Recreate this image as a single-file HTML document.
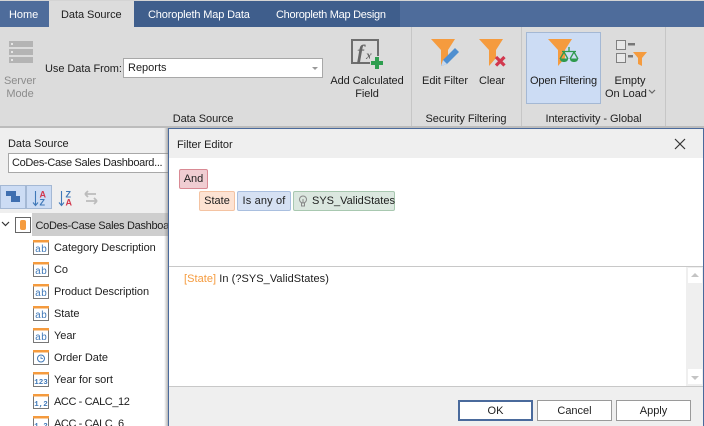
<!DOCTYPE html>
<html><head><meta charset="utf-8">
<style>
html,body{margin:0;padding:0;width:704px;height:426px;overflow:hidden;background:#efefef}
body{font-family:"Liberation Sans",sans-serif;font-size:11px;color:#1e1e1e;position:relative}
.a{position:absolute;white-space:nowrap}
.t{position:absolute;white-space:nowrap;line-height:14px;letter-spacing:-.05px;margin-top:1px}
.c{text-align:center}
svg{position:absolute;overflow:visible}
.btn{position:absolute;box-sizing:border-box;background:#fff;border:1px solid #9a9a9a;text-align:center;line-height:20px;height:21px;top:400px}
.tok{position:absolute;box-sizing:border-box;height:20px;line-height:19px;border-radius:2px;border:1px solid;text-align:center}
</style></head><body>
<!-- tabs -->
<div class="a" style="left:0;top:0;width:704px;height:1px;background:#d4d4d4"></div>
<div class="a" style="left:0;top:1px;width:704px;height:26px;background:#4e6c9b"></div>
<div class="a" style="left:134px;top:1px;width:266px;height:26px;background:#3f5e8c"></div>
<div class="a" style="left:49px;top:1px;width:85px;height:26px;background:#dcdcdc"></div>
<div class="t" style="left:9px;top:7px;color:#fff">Home</div>
<div class="t" style="left:61px;top:7px">Data Source</div>
<div class="t" style="left:148px;top:7px;color:#fff;letter-spacing:-.15px">Choropleth Map Data</div>
<div class="t" style="left:276px;top:7px;color:#fff;letter-spacing:-.28px">Choropleth Map Design</div>
<!-- ribbon -->
<div class="a" style="left:0;top:27px;width:704px;height:100px;background:#dcdcdc"></div>
<div class="a" style="left:0;top:126px;width:704px;height:2px;background:#bcbcbc"></div>
<div class="a" style="left:411px;top:27px;width:1px;height:99px;background:#c6c6c6"></div>
<div class="a" style="left:521px;top:27px;width:1px;height:99px;background:#c6c6c6"></div>
<div class="a" style="left:665px;top:27px;width:1px;height:99px;background:#c6c6c6"></div>
<!-- server mode -->
<svg style="left:0;top:0" width="40" height="70">
<rect x="9" y="41" width="24" height="6" fill="#b4b4b4"/><rect x="9" y="49" width="24" height="6" fill="#b4b4b4"/><rect x="9" y="57" width="24" height="6" fill="#b4b4b4"/>
<rect x="11" y="43" width="2" height="2" fill="#e6e6e6"/><rect x="11" y="51" width="2" height="2" fill="#e6e6e6"/><rect x="11" y="59" width="2" height="2" fill="#e6e6e6"/>
</svg>
<div class="t c" style="left:0;width:40px;top:73px;color:#8c8c8c">Server</div>
<div class="t c" style="left:0;width:40px;top:86px;color:#8c8c8c">Mode</div>
<div class="t" style="left:45px;top:61px">Use Data From:</div>
<div class="a" style="left:123px;top:58px;width:200px;height:20px;box-sizing:border-box;background:#fff;border:1px solid #a8a8a8;line-height:19px;padding-left:4px">Reports</div>
<svg style="left:311px;top:66px" width="8" height="5"><path d="M1 1h6L4 4z" fill="#999"/></svg>
<!-- add calc -->
<svg style="left:345px;top:34px" width="50" height="40">
<rect x="7" y="6" width="26" height="23" fill="none" stroke="#6e6e6e" stroke-width="2"/>
<text x="12" y="25" font-family="Liberation Serif,serif" font-style="italic" font-weight="bold" font-size="21" fill="#666">f</text>
<text x="21" y="25" font-family="Liberation Serif,serif" font-style="italic" font-weight="bold" font-size="12" fill="#666">x</text>
<rect x="25" y="22" width="14" height="14" fill="#dcdcdc"/>
<path d="M26 27h4v-4h4v4h4v4h-4v4h-4v-4h-4z" fill="#2e9e4f"/>
</svg>
<div class="t c" style="left:325px;width:84px;top:73px;letter-spacing:-.1px">Add Calculated</div>
<div class="t c" style="left:325px;width:84px;top:86px">Field</div>
<div class="t c" style="left:150px;width:106px;top:111px">Data Source</div>
<!-- Edit filter -->
<svg style="left:430px;top:38px" width="34" height="30">
<path d="M1 1h24L18 12v8L11 28V12z" fill="#f59b3e"/>
<path d="M11 28l2-6 12-12 4 4-12 12z" fill="#4f8fd0"/><path d="M11 28l2-6 4 4z" fill="#c5d8ee"/>
</svg>
<div class="t c" style="left:412px;width:66px;top:73px">Edit Filter</div>
<!-- Clear -->
<svg style="left:478px;top:38px" width="34" height="30">
<path d="M1 1h24L18 12v8L11 28V12z" fill="#f59b3e"/>
<path d="M18 19l8.500 8.500M26.500 19L18 27.500" stroke="#d2384e" stroke-width="3.200" fill="none"/>
</svg>
<div class="t c" style="left:472px;width:40px;top:73px">Clear</div>
<div class="t c" style="left:412px;width:108px;top:111px">Security Filtering</div>
<!-- Open filtering -->
<div class="a" style="left:526px;top:32px;width:75px;height:72px;box-sizing:border-box;background:#ccdcf4;border:1px solid #a4b8d4"></div>
<svg style="left:547px;top:38px" width="40" height="30">
<path d="M1 1h24L18 12v8L11 28V12z" fill="#f59b3e"/>
<path d="M22 9v4M15 13.500h14M17 14l-4 7M17 14l4 7M27 14l-4 7M27 14l4 7" stroke="#2f9a4f" stroke-width="1.300" fill="none"/>
<path d="M13 20.500h8c0 2.500-1.500 3.500-4 3.500s-4-1-4-3.500zM23 20.500h8c0 2.500-1.500 3.500-4 3.500s-4-1-4-3.500z" fill="#2f9a4f"/>
</svg>
<div class="t c" style="left:526px;width:75px;top:73px;letter-spacing:-.15px">Open Filtering</div>
<!-- Empty on load -->
<svg style="left:614px;top:38px" width="40" height="30">
<rect x="2.500" y="2.500" width="9" height="9" fill="#e8e8e8" stroke="#808080"/>
<rect x="2.500" y="15.500" width="9" height="9" fill="#e8e8e8" stroke="#808080"/>
<rect x="14" y="5" width="7" height="2.500" fill="#777"/><rect x="14" y="17" width="5" height="2.500" fill="#777"/>
<path d="M19 14h14l-5 6v8l-4-2v-6z" fill="#f59b3e"/>
</svg>
<div class="t c" style="left:610px;width:40px;top:73px">Empty</div>
<div class="t" style="left:605px;top:86px">On Load</div>
<svg style="left:648px;top:89px" width="9" height="6"><path d="M1 1l3 3 3-3" stroke="#666" stroke-width="1.200" fill="none"/></svg>
<div class="t c" style="left:522px;width:143px;top:111px">Interactivity - Global</div>
<!-- left panel -->
<div class="a" style="left:0;top:128px;width:168px;height:298px;background:#efefef"></div>
<div class="t" style="left:8px;top:136px">Data Source</div>
<div class="a" style="left:8px;top:153px;width:160px;height:20px;box-sizing:border-box;background:#fff;border:1px solid #a8a8a8;border-right:0;line-height:19px;padding-left:3px;letter-spacing:-.32px">CoDes-Case Sales Dashboard...</div>
<!-- tool buttons -->
<div class="a" style="left:0;top:185px;width:26px;height:24px;box-sizing:border-box;background:#ccdcf4;border:1px solid #a4b8d4"></div>
<div class="a" style="left:26px;top:185px;width:26px;height:24px;box-sizing:border-box;background:#ccdcf4;border:1px solid #a4b8d4"></div>
<svg style="left:0;top:180px" width="110" height="32">
<rect x="6" y="11" width="10" height="5" fill="#3f6fb0"/><rect x="11" y="16" width="9" height="6" fill="#3f6fb0"/>
<path d="M35.500 11v14M33 22.500l2.500 3 2.500-3" stroke="#3f78b8" stroke-width="1.100" fill="none"/>
<path d="M61.500 11v14M59 22.500l2.500 3 2.500-3" stroke="#3f78b8" stroke-width="1.100" fill="none"/>
<text x="39.500" y="17.500" font-size="9" font-weight="bold" fill="#d2384e">A</text><text x="39.500" y="25.500" font-size="9" font-weight="bold" fill="#3f78b8">Z</text>
<text x="65.500" y="17.500" font-size="9" font-weight="bold" fill="#3f78b8">Z</text><text x="65.500" y="25.500" font-size="9" font-weight="bold" fill="#d2384e">A</text>
<path d="M85 14h11M85 14l3-3M85 14l3 3M97 21H86M97 21l-3-3M97 21l-3 3" stroke="#bcbcbc" stroke-width="1.800" fill="none"/>
</svg>
<!-- tree -->
<div class="a" style="left:0;top:213px;width:168px;height:213px;background:#fff"></div>
<div class="a" style="left:32px;top:213px;width:136px;height:23px;background:#cecece"></div>
<svg style="left:0;top:213px" width="32" height="23">
<path d="M2 9l3.500 3.500L9 9" stroke="#333" stroke-width="1.200" fill="none"/>
<rect x="15.500" y="4.500" width="15" height="15" fill="#fff" stroke="#666"/>
<rect x="20" y="7" width="6" height="10" rx="2" fill="#f59b3e"/>
</svg>
<div class="t" style="left:35.500px;top:218px;width:132px;overflow:hidden;letter-spacing:-.3px">CoDes-Case Sales Dashboard</div>
<svg style="left:33px;top:240px" width="16" height="186" font-family="Liberation Mono,monospace" font-size="10" fill="#3f78b8" text-anchor="middle">
<g><rect x=".5" y="1.500" width="15" height="13" fill="#fff" stroke="#777"/><rect y="0" width="16" height="2.500" fill="#f59b3e"/><text x="8" y="12">ab</text></g>
<g transform="translate(0,22)"><rect x=".5" y="1.500" width="15" height="13" fill="#fff" stroke="#777"/><rect y="0" width="16" height="2.500" fill="#f59b3e"/><text x="8" y="12">ab</text></g>
<g transform="translate(0,44)"><rect x=".5" y="1.500" width="15" height="13" fill="#fff" stroke="#777"/><rect y="0" width="16" height="2.500" fill="#f59b3e"/><text x="8" y="12">ab</text></g>
<g transform="translate(0,66)"><rect x=".5" y="1.500" width="15" height="13" fill="#fff" stroke="#777"/><rect y="0" width="16" height="2.500" fill="#f59b3e"/><text x="8" y="12">ab</text></g>
<g transform="translate(0,88)"><rect x=".5" y="1.500" width="15" height="13" fill="#fff" stroke="#777"/><rect y="0" width="16" height="2.500" fill="#f59b3e"/><text x="8" y="12">ab</text></g>
<g transform="translate(0,110)"><rect x=".5" y="1.500" width="15" height="13" fill="#fff" stroke="#777"/><rect y="0" width="16" height="2.500" fill="#f59b3e"/><circle cx="8" cy="8.500" r="3.500" fill="none" stroke="#3f78b8"/><path d="M8 6.500v2h2" stroke="#3f78b8" fill="none" stroke-width=".8"/></g>
<g transform="translate(0,132)"><rect x=".5" y="1.500" width="15" height="13" fill="#fff" stroke="#777"/><rect y="0" width="16" height="2.500" fill="#f59b3e"/><text x="8" y="12" font-size="7.500" font-weight="bold">123</text></g>
<g transform="translate(0,154)"><rect x=".5" y="1.500" width="15" height="13" fill="#fff" stroke="#777"/><rect y="0" width="16" height="2.500" fill="#f59b3e"/><text x="8" y="12" font-size="7.500" font-weight="bold">1,2</text></g>
<g transform="translate(0,176)"><rect x=".5" y="1.500" width="15" height="13" fill="#fff" stroke="#777"/><rect y="0" width="16" height="2.500" fill="#f59b3e"/><text x="8" y="12" font-size="7.500" font-weight="bold">1,2</text></g>
</svg>
<div class="t" style="left:54px;top:240px">Category Description</div>
<div class="t" style="left:54px;top:262px">Co</div>
<div class="t" style="left:54px;top:284px">Product Description</div>
<div class="t" style="left:54px;top:306px">State</div>
<div class="t" style="left:54px;top:328px">Year</div>
<div class="t" style="left:54px;top:350px">Order Date</div>
<div class="t" style="left:54px;top:372px">Year for sort</div>
<div class="t" style="left:54px;top:394px;letter-spacing:-.4px">ACC - CALC_12</div>
<div class="t" style="left:54px;top:416px;letter-spacing:-.4px">ACC - CALC_6</div>
<!-- dialog shadow -->
<div class="a" style="left:164px;top:128px;width:4px;height:298px;background:linear-gradient(90deg,rgba(120,120,120,0),rgba(120,120,120,.55))"></div>
<!-- dialog -->
<div class="a" style="left:168px;top:128px;width:536px;height:298px;box-sizing:border-box;background:#fff;border:1px solid #4a6a9c;border-bottom:0"></div>
<div class="a" style="left:169px;top:129px;width:534px;height:29px;background:#efefef"></div>
<div class="t" style="left:177px;top:137px">Filter Editor</div>
<svg style="left:674px;top:138px" width="12" height="12"><path d="M1 1l10 10M11 1L1 11" stroke="#333" stroke-width="1.200" fill="none"/></svg>
<div class="tok" style="left:179px;top:169px;width:29px;background:#f0cdd2;border-color:#d98a94">And</div>
<div class="tok" style="left:199px;top:191px;width:36px;background:#fde3d3;border-color:#f4c3a2">State</div>
<div class="tok" style="left:237px;top:191px;width:54px;background:#d6e1f3;border-color:#a9bfdf;letter-spacing:.15px">Is any of</div>
<div class="tok" style="left:293px;top:191px;width:102px;background:#dbe7df;border-color:#a8c8b0;text-align:left;padding-left:18px">SYS_ValidStates</div>
<svg style="left:298px;top:195px" width="10" height="13"><circle cx="5" cy="4.500" r="3.500" fill="none" stroke="#888"/><path d="M3.500 8v3h3V8M5 4v4" stroke="#888" fill="none"/></svg>
<div class="a" style="left:169px;top:266px;width:534px;height:1px;background:#c8c8c8"></div>
<div class="t" style="left:184px;top:271px;letter-spacing:.05px"><span style="color:#f59b3e">[State]</span> In (?SYS_ValidStates)</div>
<!-- scrollbar -->
<div class="a" style="left:686px;top:267px;width:17px;height:119px;background:#efefef"></div>
<div class="a" style="left:688px;top:268px;width:14px;height:15px;background:#fff"></div>
<div class="a" style="left:688px;top:369px;width:14px;height:15px;background:#fff"></div>
<svg style="left:691px;top:272px" width="9" height="6"><path d="M0 5h8L4 1z" fill="#c4c4c4"/></svg>
<svg style="left:691px;top:375px" width="9" height="6"><path d="M0 1h8L4 5z" fill="#c4c4c4"/></svg>
<!-- footer -->
<div class="a" style="left:169px;top:386px;width:534px;height:1px;background:#c8c8c8"></div>
<div class="a" style="left:169px;top:387px;width:534px;height:39px;background:#efefef"></div>
<div class="btn" style="left:458px;width:75px;border:2px solid #4a6a9c;line-height:18px">OK</div>
<div class="btn" style="left:537px;width:75px">Cancel</div>
<div class="btn" style="left:616px;width:75px">Apply</div>
</body></html>
